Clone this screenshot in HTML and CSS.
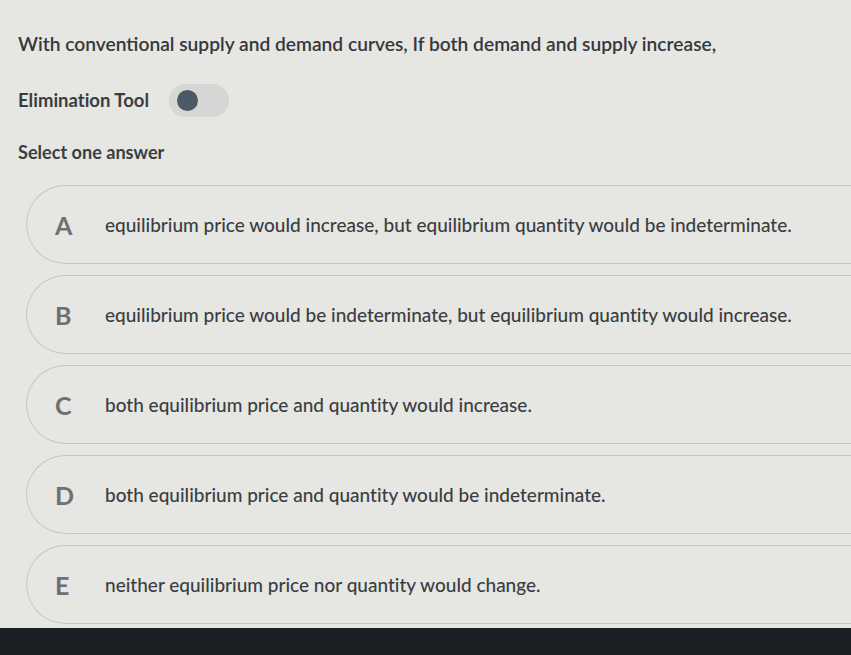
FILE: index.html
```html
<!DOCTYPE html>
<html>
<head>
<meta charset="utf-8">
<link rel="stylesheet" href="styles.css">
</head>
<body>
<div class="page">
  <div class="content">
    <p class="question">With conventional supply and demand curves, If both demand and supply increase,</p>
    <div class="tool-row">
      <span class="label">Elimination Tool</span>
      <span class="toggle"><span class="knob"></span></span>
    </div>
    <p class="select">Select one answer</p>
    <div class="options">
      <div class="option"><span class="letter">A</span><span class="text">equilibrium price would increase, but equilibrium quantity would be indeterminate.</span></div>
      <div class="option"><span class="letter">B</span><span class="text">equilibrium price would be indeterminate, but equilibrium quantity would increase.</span></div>
      <div class="option"><span class="letter">C</span><span class="text">both equilibrium price and quantity would increase.</span></div>
      <div class="option"><span class="letter">D</span><span class="text">both equilibrium price and quantity would be indeterminate.</span></div>
      <div class="option"><span class="letter">E</span><span class="text">neither equilibrium price nor quantity would change.</span></div>
    </div>
  </div>
  <div class="bottom-bar"></div>
</div>
</body>
</html>
```
FILE: styles.css
```css
html, body {
  margin: 0;
  padding: 0;
  height: 100%;
  overflow: hidden;
}
body {
  background: #e6e6e3;
  font-family: Lato, "Open Sans", sans-serif;
  color: #3a3e42;
}
.page {
  display: flex;
  flex-direction: column;
  height: 655px;
}
.content {
  flex: 1;
  padding: 0 0 0 18px;
  overflow: hidden;
}
.question {
  margin: 0;
  padding-top: 30px;
  font-size: 19.2px;
  font-weight: 600;
  line-height: 28px;
  color: #34383c;
}
.tool-row {
  display: flex;
  align-items: center;
  margin-top: 25px;
  height: 34px;
}
.label {
  font-size: 18.5px;
  font-weight: 700;
  color: #3a3e42;
  font-variant-ligatures: none;
}
.toggle {
  display: flex;
  align-items: center;
  width: 60px;
  height: 33px;
  margin-left: 20px;
  border-radius: 17px;
  background: #d6d6d4;
  box-sizing: border-box;
  padding-left: 8px;
}
.knob {
  width: 21px;
  height: 21px;
  border-radius: 50%;
  background: #4b5866;
}
.select {
  margin: 23px 0 0 0;
  font-size: 18.1px;
  font-weight: 700;
  line-height: 24px;
  color: #3a3e42;
}
.options {
  display: flex;
  flex-direction: column;
  gap: 11px;
  margin-top: 21px;
  margin-left: 8px;
  width: 900px;
}
.option {
  display: flex;
  align-items: center;
  height: 79px;
  border: 1.5px solid #c6c6c3;
  border-right: none;
  border-radius: 40px 0 0 40px;
  box-sizing: border-box;
  padding-left: 28px;
}
.letter {
  width: 50px;
  font-size: 25px;
  font-weight: 700;
  color: #6c7073;
}
.text {
  font-size: 19px;
  font-weight: 500;
  color: #3a3e42;
  font-variant-ligatures: none;
}
.bottom-bar {
  height: 27px;
  background: #1b1e23;
}
```
